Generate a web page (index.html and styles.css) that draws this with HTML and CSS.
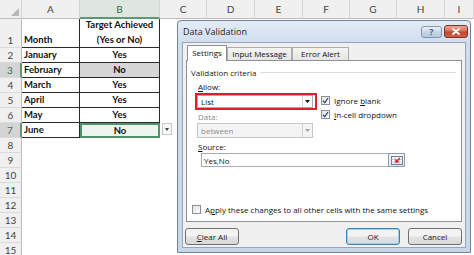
FILE: index.html
```html
<!DOCTYPE html>
<html lang="en">
<head>
    <meta charset="UTF-8">
    <title>Data Validation</title>
    <link rel="stylesheet" href="styles.css">
</head>
<body>

    <div class="sheet">
        <div class="corner"><span class="tri"></span></div>
        <div class="colHead">A</div>
        <div class="colHead sel">B</div>
        <div class="colRest">
            <div class="colHead w47">C</div>
            <div class="colHead w48">D</div>
            <div class="colHead w48">E</div>
            <div class="colHead w47">F</div>
            <div class="colHead w47">G</div>
            <div class="colHead w48">H</div>
            <div class="colHead w29">I</div>
        </div>

        <div class="rowHead bottom">1</div>
        <div class="cell t top bottom">Month</div>
        <div class="cell t top mid bottom">Target Achieved<br>(Yes or No)</div>

        <div class="rowHead">2</div>
        <div class="cell t">January</div>
        <div class="cell t mid">Yes</div>

        <div class="rowHead sel">3</div>
        <div class="cell t">February</div>
        <div class="cell t mid grey">No</div>

        <div class="rowHead">4</div>
        <div class="cell t">March</div>
        <div class="cell t mid">Yes</div>

        <div class="rowHead">5</div>
        <div class="cell t">April</div>
        <div class="cell t mid">Yes</div>

        <div class="rowHead">6</div>
        <div class="cell t">May</div>
        <div class="cell t mid">Yes</div>

        <div class="rowHead sel">7</div>
        <div class="cell t">June</div>
        <div class="cell t mid active">No</div>
        <div class="dropCell"><span class="cellDrop"></span></div>

        <div class="rowHead">8</div>
        <div class="rowHead">9</div>
        <div class="rowHead">10</div>
        <div class="rowHead">11</div>
        <div class="rowHead">12</div>
        <div class="rowHead">13</div>
        <div class="rowHead">14</div>
        <div class="rowHead">15</div>
    </div>

    <div class="dialog">
        <div class="titleBar">
            <div class="title">Data Validation</div>
            <div class="titleBtns">
                <div class="helpBtn">?</div>
                <div class="closeBtn">
                    <svg width="10" height="7" viewBox="0 0 10 7"><path d="M2 1 L8 6 M8 1 L2 6" stroke="#fff" stroke-width="1.8" stroke-linecap="round"/></svg>
                </div>
            </div>
        </div>

        <div class="dlgBody">
            <div class="tabs">
                <div class="tab on w39">Settings</div>
                <div class="tab w65">Input Message</div>
                <div class="tab w57">Error Alert</div>
            </div>

            <div class="panel">
                <div class="legend"><span>Validation criteria</span><span class="rule"></span></div>

                <div class="criteria">
                    <div class="fieldCol">
                        <div class="label"><u>A</u>llow:</div>
                        <div class="redBox">
                            <div class="select">List<span class="arrow"><svg width="5" height="3" viewBox="0 0 5 3"><path d="M0 0 H5 L2.5 3 Z" fill="#111"/></svg></span></div>
                        </div>
                        <div class="label dim gapData">Data:</div>
                        <div class="select off narrow">between<span class="arrow"><svg width="5" height="3" viewBox="0 0 5 3"><path d="M0 0 H5 L2.5 3 Z" fill="#a0a0a0"/></svg></span></div>
                    </div>
                    <div class="checks">
                        <div class="check"><span class="box on"><svg width="7" height="7" viewBox="0 0 7 7"><path d="M1 3.8 L2.8 5.8 L6 1" stroke="#1d4f8c" stroke-width="1.3" fill="none"/></svg></span><span>Ignore <u>b</u>lank</span></div>
                        <div class="check"><span class="box on"><svg width="7" height="7" viewBox="0 0 7 7"><path d="M1 3.8 L2.8 5.8 L6 1" stroke="#1d4f8c" stroke-width="1.3" fill="none"/></svg></span><span><u>I</u>n-cell dropdown</span></div>
                    </div>
                </div>

                <div class="label source"><u>S</u>ource:</div>
                <div class="input">
                    <span class="val">Yes,No</span>
                    <span class="rangeBtn">
                        <svg width="12" height="9" viewBox="0 0 12 9">
                            <rect x="0.5" y="0.5" width="11" height="8" fill="#fff" stroke="#6b7f99"/>
                            <path d="M0.5 3.5 H11.5 M0.5 6 H11.5 M4 0.5 V8.5 M8 0.5 V8.5" stroke="#9fb0c6" stroke-width="0.7"/>
                            <path d="M9 2 L5 6 M5 3.5 V6 H7.5" stroke="#d4262c" stroke-width="1.4" fill="none"/>
                        </svg>
                    </span>
                </div>

                <div class="check apply"><span class="box"></span><span>A<u>p</u>ply these changes to all other cells with the same settings</span></div>
            </div>

            <div class="btnRow">
                <div class="btn clear"><span><u>C</u>lear All</span></div>
                <div class="btn ok">OK</div>
                <div class="btn cancel">Cancel</div>
            </div>
        </div>
    </div>

</body>
</html>
```

FILE: styles.css
```css
body {
    margin: 0;
    background: #fff;
    overflow: hidden;
    font-family: "Lato", "Liberation Sans", sans-serif;
}

/* spreadsheet */
.sheet {
    display: grid;
    grid-template-columns: 22px 58px 80px 1fr;
    grid-template-rows: 19px 29px;
    grid-auto-rows: 15px;
    height: 255px;
    overflow: hidden;
}
.corner {
    background: #f0f0f0;
    border-right: 1px solid #d4d4d4;
    border-bottom: 1px solid #bdbdbd;
    display: flex;
    align-items: flex-end;
    justify-content: flex-end;
    padding: 0 2px 2px 0;
}
.tri {
    width: 0;
    height: 0;
    border-left: 8px solid transparent;
    border-bottom: 8px solid #b8b8b8;
}
.colHead {
    box-sizing: border-box;
    background: #f0f0f0;
    border-right: 1px solid #d4d4d4;
    border-bottom: 1px solid #bdbdbd;
    display: flex;
    align-items: center;
    justify-content: center;
    font-size: 10px;
    color: #444;
}
.colHead.sel {
    background: #dfe5e0;
    color: #217346;
    border-bottom: 2px solid #5d9a72;
}
.colRest {
    display: flex;
}
.w47 { width: 47px; flex: none; }
.w48 { width: 48px; flex: none; }
.w29 { width: 29px; flex: none; }

.rowHead {
    grid-column: 1;
    box-sizing: border-box;
    background: #f0f0f0;
    border-right: 1px solid #bdbdbd;
    border-bottom: 1px solid #dadada;
    font-size: 10px;
    color: #444;
    text-align: center;
    line-height: 14px;
}
.rowHead.sel {
    background: #d4d4d4;
    color: #3f6f52;
    border-right: 2px solid #5d9a72;
}
.rowHead.bottom {
    display: flex;
    align-items: flex-end;
    justify-content: center;
}

.cell {
    box-sizing: border-box;
    font-size: 9.5px;
    font-weight: 700;
    color: #111;
    padding: 0 2px;
    line-height: 14px;
    white-space: nowrap;
}
.cell.t {
    border-right: 1px solid #2a2a2a;
    border-bottom: 1px solid #2a2a2a;
}
.cell.mid {
    text-align: center;
}
.cell.bottom {
    display: flex;
    flex-direction: column;
    justify-content: flex-end;
    line-height: 15px;
}
.cell.mid.bottom {
    align-items: center;
}
.cell.grey {
    background: #d6d6d6;
}
.cell.active {
    background: #eef5f0;
    border: 2px solid #4e9468;
    line-height: 11px;
}
.dropCell {
    padding: 0 0 0 2px;
}
.cellDrop {
    display: block;
    width: 10px;
    height: 12px;
    box-sizing: border-box;
    border: 1px solid #c8c8c8;
    background: #f7f7f7;
    position: relative;
}
.cellDrop::after {
    content: "";
    position: absolute;
    left: 2px;
    top: 4px;
    border-left: 2.5px solid transparent;
    border-right: 2.5px solid transparent;
    border-top: 3px solid #444;
}

/* dialog window */
.dialog {
    position: absolute;
    left: 177px;
    top: 20px;
    width: 294px;
    height: 233px;
    box-sizing: border-box;
    border: 1px solid #71849c;
    border-radius: 4px 4px 0 0;
    background: linear-gradient(#e4ecf5, #d0dded 22px, #c8d7e8);
    padding: 0 4px 4px;
    display: flex;
    flex-direction: column;
    font-family: "Open Sans", "Noto Sans", sans-serif;
    font-size: 8px;
    color: #111;
}
.titleBar {
    height: 21px;
    display: flex;
    align-items: center;
}
.title {
    padding-left: 1px;
    font-size: 9px;
    color: #1c2533;
}
.titleBtns {
    margin-left: auto;
    margin-right: -2px;
    display: flex;
    gap: 2px;
    align-items: center;
}
.helpBtn {
    width: 21px;
    height: 12px;
    box-sizing: border-box;
    border: 1px solid #8296af;
    border-radius: 3px;
    background: linear-gradient(#eaf1f8, #c4d4e6 55%, #b3c7dd);
    font-size: 9px;
    font-weight: 700;
    color: #4f6582;
    display: flex;
    align-items: center;
    justify-content: center;
    line-height: 1;
}
.closeBtn {
    width: 24px;
    height: 13px;
    box-sizing: border-box;
    border: 1px solid #7b3327;
    border-radius: 3px;
    background: linear-gradient(#eda896, #d86a52 48%, #c5432c 52%, #d0614a);
    display: flex;
    align-items: center;
    justify-content: center;
}

.dlgBody {
    flex: 1;
    background: #f0f0f0;
    border: 1px solid #95a6bb;
    padding: 2px 3px 0;
    display: flex;
    flex-direction: column;
}
.tabs {
    display: flex;
    align-items: flex-end;
    height: 15px;
    padding-left: 1px;
    position: relative;
    z-index: 1;
}
.tab {
    box-sizing: border-box;
    height: 13px;
    border: 1px solid #acacac;
    border-bottom: none;
    background: linear-gradient(#f5f5f5, #e5e5e5);
    text-align: center;
    line-height: 12px;
}
.tab.on {
    height: 16px;
    margin-bottom: -1px;
    background: #fff;
    border-color: #8e9196;
    line-height: 14px;
}
.w39 { width: 40px; }
.w65 { width: 65px; }
.w57 { width: 57px; }

.panel {
    height: 162px;
    box-sizing: border-box;
    background: #fff;
    border: 1px solid #8e9196;
    padding: 5px 5px 0 4px;
}
.legend {
    display: flex;
    align-items: center;
    gap: 4px;
    height: 12px;
    color: #1b1b1b;
}
.rule {
    flex: 1;
    height: 1px;
    background: #dddddd;
}
.criteria {
    display: flex;
    gap: 4px;
    margin-top: 3px;
    padding-left: 4px;
}
.fieldCol {
    width: 122px;
    display: flex;
    flex-direction: column;
}
.label {
    height: 12px;
    line-height: 12px;
    padding-left: 3px;
}
.label.dim {
    color: #8a8a8a;
}
.gapData {
    margin-top: 1px;
}
.redBox {
    height: 17px;
    box-sizing: border-box;
    border: 2px solid #e01e2b;
    padding: 0 2px 0 0;
}
.select {
    height: 13px;
    box-sizing: border-box;
    border: 1px solid #a9abb2;
    background: #fff;
    display: flex;
    align-items: center;
    padding-left: 3px;
    line-height: 1;
}
.select.off {
    height: 15px;
    background: #f4f4f4;
    border-color: #c6c6c6;
    color: #8d8d8d;
}
.narrow {
    width: 116px;
    margin-left: 2px;
}
.arrow {
    margin-left: auto;
    width: 10px;
    height: 100%;
    box-sizing: border-box;
    border-left: 1px solid #d4d4d4;
    display: flex;
    align-items: center;
    justify-content: center;
}
.checks {
    margin-top: 13px;
    display: flex;
    flex-direction: column;
    gap: 2px;
}
.check {
    display: flex;
    align-items: center;
    gap: 4px;
    height: 12px;
}
.box {
    width: 9px;
    height: 9px;
    box-sizing: border-box;
    border: 1px solid #8f8f8f;
    background: linear-gradient(135deg, #e2e2e2, #fbfbfb);
    display: flex;
    align-items: center;
    justify-content: center;
}
.source {
    margin-top: 3px;
    margin-left: 4px;
}
.input {
    width: 204px;
    height: 14px;
    margin-left: 10px;
    box-sizing: border-box;
    border: 1px solid #a9abb2;
    display: flex;
    align-items: center;
    padding-left: 2px;
}
.rangeBtn {
    margin-left: auto;
    width: 17px;
    height: 14px;
    box-sizing: border-box;
    border: 1px solid #8c9bb0;
    border-radius: 2px;
    background: linear-gradient(#f6f8fb, #dfe6ef);
    margin-right: -1px;
    display: flex;
    align-items: center;
    justify-content: center;
}
.apply {
    margin-top: 36px;
    margin-left: 1px;
}

.btnRow {
    display: flex;
    margin-top: 6px;
}
.btn {
    width: 54px;
    height: 17px;
    box-sizing: border-box;
    border: 1px solid #707070;
    border-radius: 3px;
    background: linear-gradient(#f3f3f3 45%, #e3e3e3 55%, #d8d8d8);
    display: flex;
    align-items: center;
    justify-content: center;
    color: #1b1b1b;
}
.btn.clear {
    margin-left: -1px;
}
.btn.ok {
    margin-left: auto;
    border-color: #3c7fb1;
    box-shadow: inset 0 0 0 1px #9fd2ef;
}
.btn.cancel {
    margin-left: 8px;
}
```
